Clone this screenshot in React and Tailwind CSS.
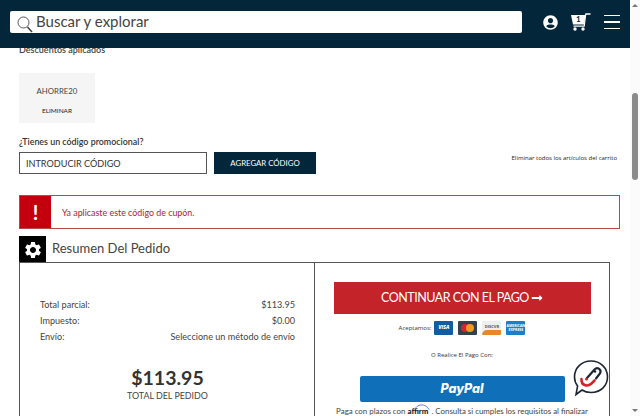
import { FaLongArrowAltRight, FaUserCircle } from 'react-icons/fa'
import { MdSettings } from 'react-icons/md'

const ROWS = [
  { label: 'Total parcial:', value: '$113.95' },
  { label: 'Impuesto:', value: '$0.00' },
  { label: 'Envío:', value: 'Seleccione un método de envío' },
]

function SearchIcon() {
  return (
    <svg viewBox="0 0 16 17" className="h-[17px] w-[16px] shrink-0 text-[#444]" fill="none" stroke="currentColor">
      <circle cx="6.5" cy="6.5" r="5.5" strokeWidth="0.9" />
      <path d="M10.5 11 L15 16" strokeWidth="1.6" />
    </svg>
  )
}

function CartIcon() {
  return (
    <div className="relative ml-[13px] h-[18px] w-[20px]">
      <svg viewBox="0 0 20 18" className="h-[18px] w-[20px] text-white" fill="currentColor">
        <path d="M0 2 H14.5 L13.2 11.5 H2 Z" />
        <path d="M14 3 L15 1 H19.5" fill="none" stroke="currentColor" strokeWidth="1.4" />
        <path d="M14.6 2 L13.2 13.2 H2.5" fill="none" stroke="currentColor" strokeWidth="1.2" />
        <circle cx="4" cy="16" r="1.7" />
        <circle cx="12" cy="16" r="1.7" />
      </svg>
      <span className="absolute left-[5px] top-[2px] text-[8px] font-bold leading-[8px] text-[#03263b]">1</span>
    </div>
  )
}

function ChatBadge() {
  return (
    <svg viewBox="0 0 36 38" className="absolute left-[573px] top-[359px] h-[38px] w-[36px]" fill="none">
      <path
        d="M18 2 C27.5 2 34.5 9 34.5 18 C34.5 27 27.5 33.5 18 33.5 C14.5 33.5 11.5 32.7 9 31 L3 35.5 L4.6 27 C2.6 24.5 1.5 21.5 1.5 18 C1.5 9 8.5 2 18 2 Z"
        fill="#fff"
        stroke="#1c2733"
        strokeWidth="1.6"
      />
      <path d="M8.5 20 C8 26 14 28.5 18.5 24.5 L21.5 21.5" stroke="#d3222c" strokeWidth="2.6" strokeLinecap="round" />
      <path d="M14 19 L21.5 10.5 C24.5 7.5 29 10.5 27 14.5 L23 19.5" stroke="#1c2733" strokeWidth="2.2" strokeLinecap="round" />
      <circle cx="22" cy="12.5" r="1.3" fill="#1c2733" />
      <circle cx="13.5" cy="20" r="1.5" fill="#d3222c" />
    </svg>
  )
}

function CardLogos() {
  return (
    <div className="flex items-center gap-[5px]">
      <div className="flex h-[14px] w-[19px] items-center justify-center rounded-[1px] bg-[#125d9f] text-[5px] font-black italic text-white">
        VISA
      </div>
      <div className="flex h-[14px] w-[19px] items-center justify-center rounded-[1px] bg-[#34424e]">
        <span className="h-[8px] w-[8px] rounded-full bg-[#d9232e]" />
        <span className="-ml-[3px] h-[8px] w-[8px] rounded-full bg-[#f29a1f]" />
      </div>
      <div className="flex h-[14px] w-[19px] flex-col overflow-hidden rounded-[1px] bg-[#eeeeee]">
        <span className="mt-[3px] text-center text-[4px] font-bold leading-[5px] text-[#555]">DISCVR</span>
        <span className="mt-auto h-[5px] w-full rounded-tl-[12px] bg-[#e58a2c]" />
      </div>
      <div className="flex h-[14px] w-[19px] flex-col items-center justify-center rounded-[1px] bg-[#1f7fc4] text-[3.5px] font-bold leading-[4px] text-white">
        <span>AMERICAN</span>
        <span>EXPRESS</span>
      </div>
    </div>
  )
}

function Scrollbar() {
  return (
    <div className="flex h-full w-[10px] shrink-0 flex-col items-center bg-[#fbfbfb]">
      <span className="mt-[4px] h-0 w-0 border-x-[3px] border-b-[3px] border-x-transparent border-b-[#777]" />
      <span className="ml-[-1px] mt-[86px] h-[87px] w-[6px] shrink-0 rounded-[3px] bg-[#8b8b8b]" />
      <span className="mb-[4px] mt-auto h-0 w-0 border-x-[3px] border-t-[3px] border-x-transparent border-t-[#777]" />
    </div>
  )
}

export default function App() {
  return (
    <div className="relative flex h-[416px] w-[640px] overflow-hidden bg-white font-['Lato','Liberation_Sans',sans-serif] text-[#333]">
      <div className="flex h-full w-[630px] shrink-0 flex-col">
        {/* Top bar */}
        <header className="relative z-10 flex h-[48px] shrink-0 items-center bg-[#03263b] pb-[4px] pl-[10px]">
          <div className="flex h-[22px] w-[512px] items-center gap-[3px] rounded-[2px] bg-white pl-[7px]">
            <span className="mt-[5px]">
              <SearchIcon />
            </span>
            <span className="-mt-[3px] text-[15px] leading-[20px] text-[#444]">Buscar y explorar</span>
          </div>
          <FaUserCircle className="ml-[21px] text-[15px] text-white" />
          <CartIcon />
          <div className="ml-[13px] flex w-[16px] flex-col gap-[5px]">
            <span className="h-[1.5px] bg-white" />
            <span className="h-[1.5px] bg-white" />
            <span className="h-[1.5px] bg-white" />
          </div>
        </header>

        <div className="-mt-[4px] flex min-h-0 flex-1 flex-col pl-[19px]">
          <p className="text-[9px] font-semibold leading-[12px] text-[#444]">Descuentos aplicados</p>

          <div className="mt-[17px] flex h-[50px] w-[76px] shrink-0 flex-col items-center bg-[#f5f5f5]">
            <span className="mt-[13px] text-[7.8px] leading-[11px] text-[#444]">AHORRE20</span>
            <span className="mt-[10px] text-[6.5px] leading-[8px] text-[#222]">ELIMINAR</span>
          </div>

          <p className="mt-[13px] text-[8.9px] font-semibold leading-[12px] text-[#333]">¿Tienes un código promocional?</p>

          <div className="mt-[4px] flex h-[22px] w-[598px] shrink-0 items-center">
            <div className="flex h-full w-[188px] items-center border border-[#555] pl-[6px] pt-[1px] text-[9.1px] text-[#333]">
              INTRODUCIR CÓDIGO
            </div>
            <div className="ml-[7px] flex h-full w-[102px] items-center justify-center bg-[#03263b] pt-[1px] text-[7.8px] text-white">
              AGREGAR CÓDIGO
            </div>
            <span className="ml-auto mb-[10px] font-['Open_Sans',sans-serif] text-[6px] leading-[8px] text-[#222]">
              Eliminar todos los artículos del carrito
            </span>
          </div>

          {/* Alert */}
          <div className="mt-[21px] flex h-[34px] w-[601px] shrink-0 items-center border border-[#b5484c]">
            <div className="flex h-full w-[31px] items-center justify-center bg-[#c4000f] text-[20px] font-bold text-white">!</div>
            <span className="ml-[11px] pt-[1px] text-[8.9px] text-[#b3202e]">Ya aplicaste este código de cupón.</span>
          </div>

          <div className="mt-[7px] flex h-[27px] shrink-0 items-center">
            <div className="flex h-[27px] w-[27px] items-center justify-center bg-black text-white">
              <MdSettings className="text-[20px]" />
            </div>
            <h2 className="ml-[6px] -mt-[2px] text-[13px] font-normal text-[#444]">Resumen Del Pedido</h2>
          </div>

          {/* Order summary */}
          <div className="-mt-px flex min-h-0 w-[591px] flex-1 border-x border-t border-[#555]">
            <div className="flex w-[295px] shrink-0 flex-col border-r border-[#555] pl-[20px] pr-[19px] pt-[34px]">
              {ROWS.map((row) => (
                <div key={row.label} className="flex h-[16px] items-center justify-between text-[9.1px] text-[#444]">
                  <span>{row.label}</span>
                  <span>{row.value}</span>
                </div>
              ))}
              <div className="mt-[22px] text-center text-[19.5px] font-bold leading-[22px] text-[#333]">$113.95</div>
              <div className="mt-[1px] text-center text-[8.9px] leading-[12px] text-[#444]">TOTAL DEL PEDIDO</div>
            </div>

            <div className="flex min-w-0 flex-1 flex-col items-center pt-[19px]">
              <div className="flex h-[32px] w-[257px] shrink-0 items-center justify-center gap-[2px] bg-[#c4232a] text-[12.5px] tracking-[-0.5px] text-white">
                CONTINUAR CON EL PAGO
                <FaLongArrowAltRight className="text-[12px]" />
              </div>
              <div className="mt-[7px] flex h-[14px] shrink-0 items-center gap-[3px] font-['Open_Sans',sans-serif] text-[6px] text-[#333]">
                <span>Aceptamos:</span>
                <CardLogos />
              </div>
              <p className="mt-[15px] font-['Open_Sans',sans-serif] text-[6px] leading-[10px] text-[#333]">O Realice El Pago Con:</p>
              <div className="mt-[16px] flex h-[26px] w-[205px] shrink-0 items-center justify-center rounded-[2px] bg-[#0f6fb8] font-['Inter',sans-serif] text-[12.5px] font-extrabold italic text-white">
                PayPal
              </div>
              <p className="mt-[3px] flex items-center whitespace-nowrap text-[7.9px] leading-[12px] text-[#444]">
                Paga con plazos con
                <span className="relative ml-[2px] font-black text-[#222]">
                  affirm
                  <svg viewBox="0 0 20 8" className="absolute -top-[2px] left-[7px] h-[7px] w-[16px]" fill="none" stroke="#3d5fc4" strokeWidth="1">
                    <path d="M1 8 C3 1 14 -1 19 8" />
                  </svg>
                </span>
                <span className="ml-[3px]">. Consulta si cumples los requisitos al finalizar</span>
              </p>
            </div>
          </div>
        </div>
      </div>
      <Scrollbar />
      <ChatBadge />
    </div>
  )
}
